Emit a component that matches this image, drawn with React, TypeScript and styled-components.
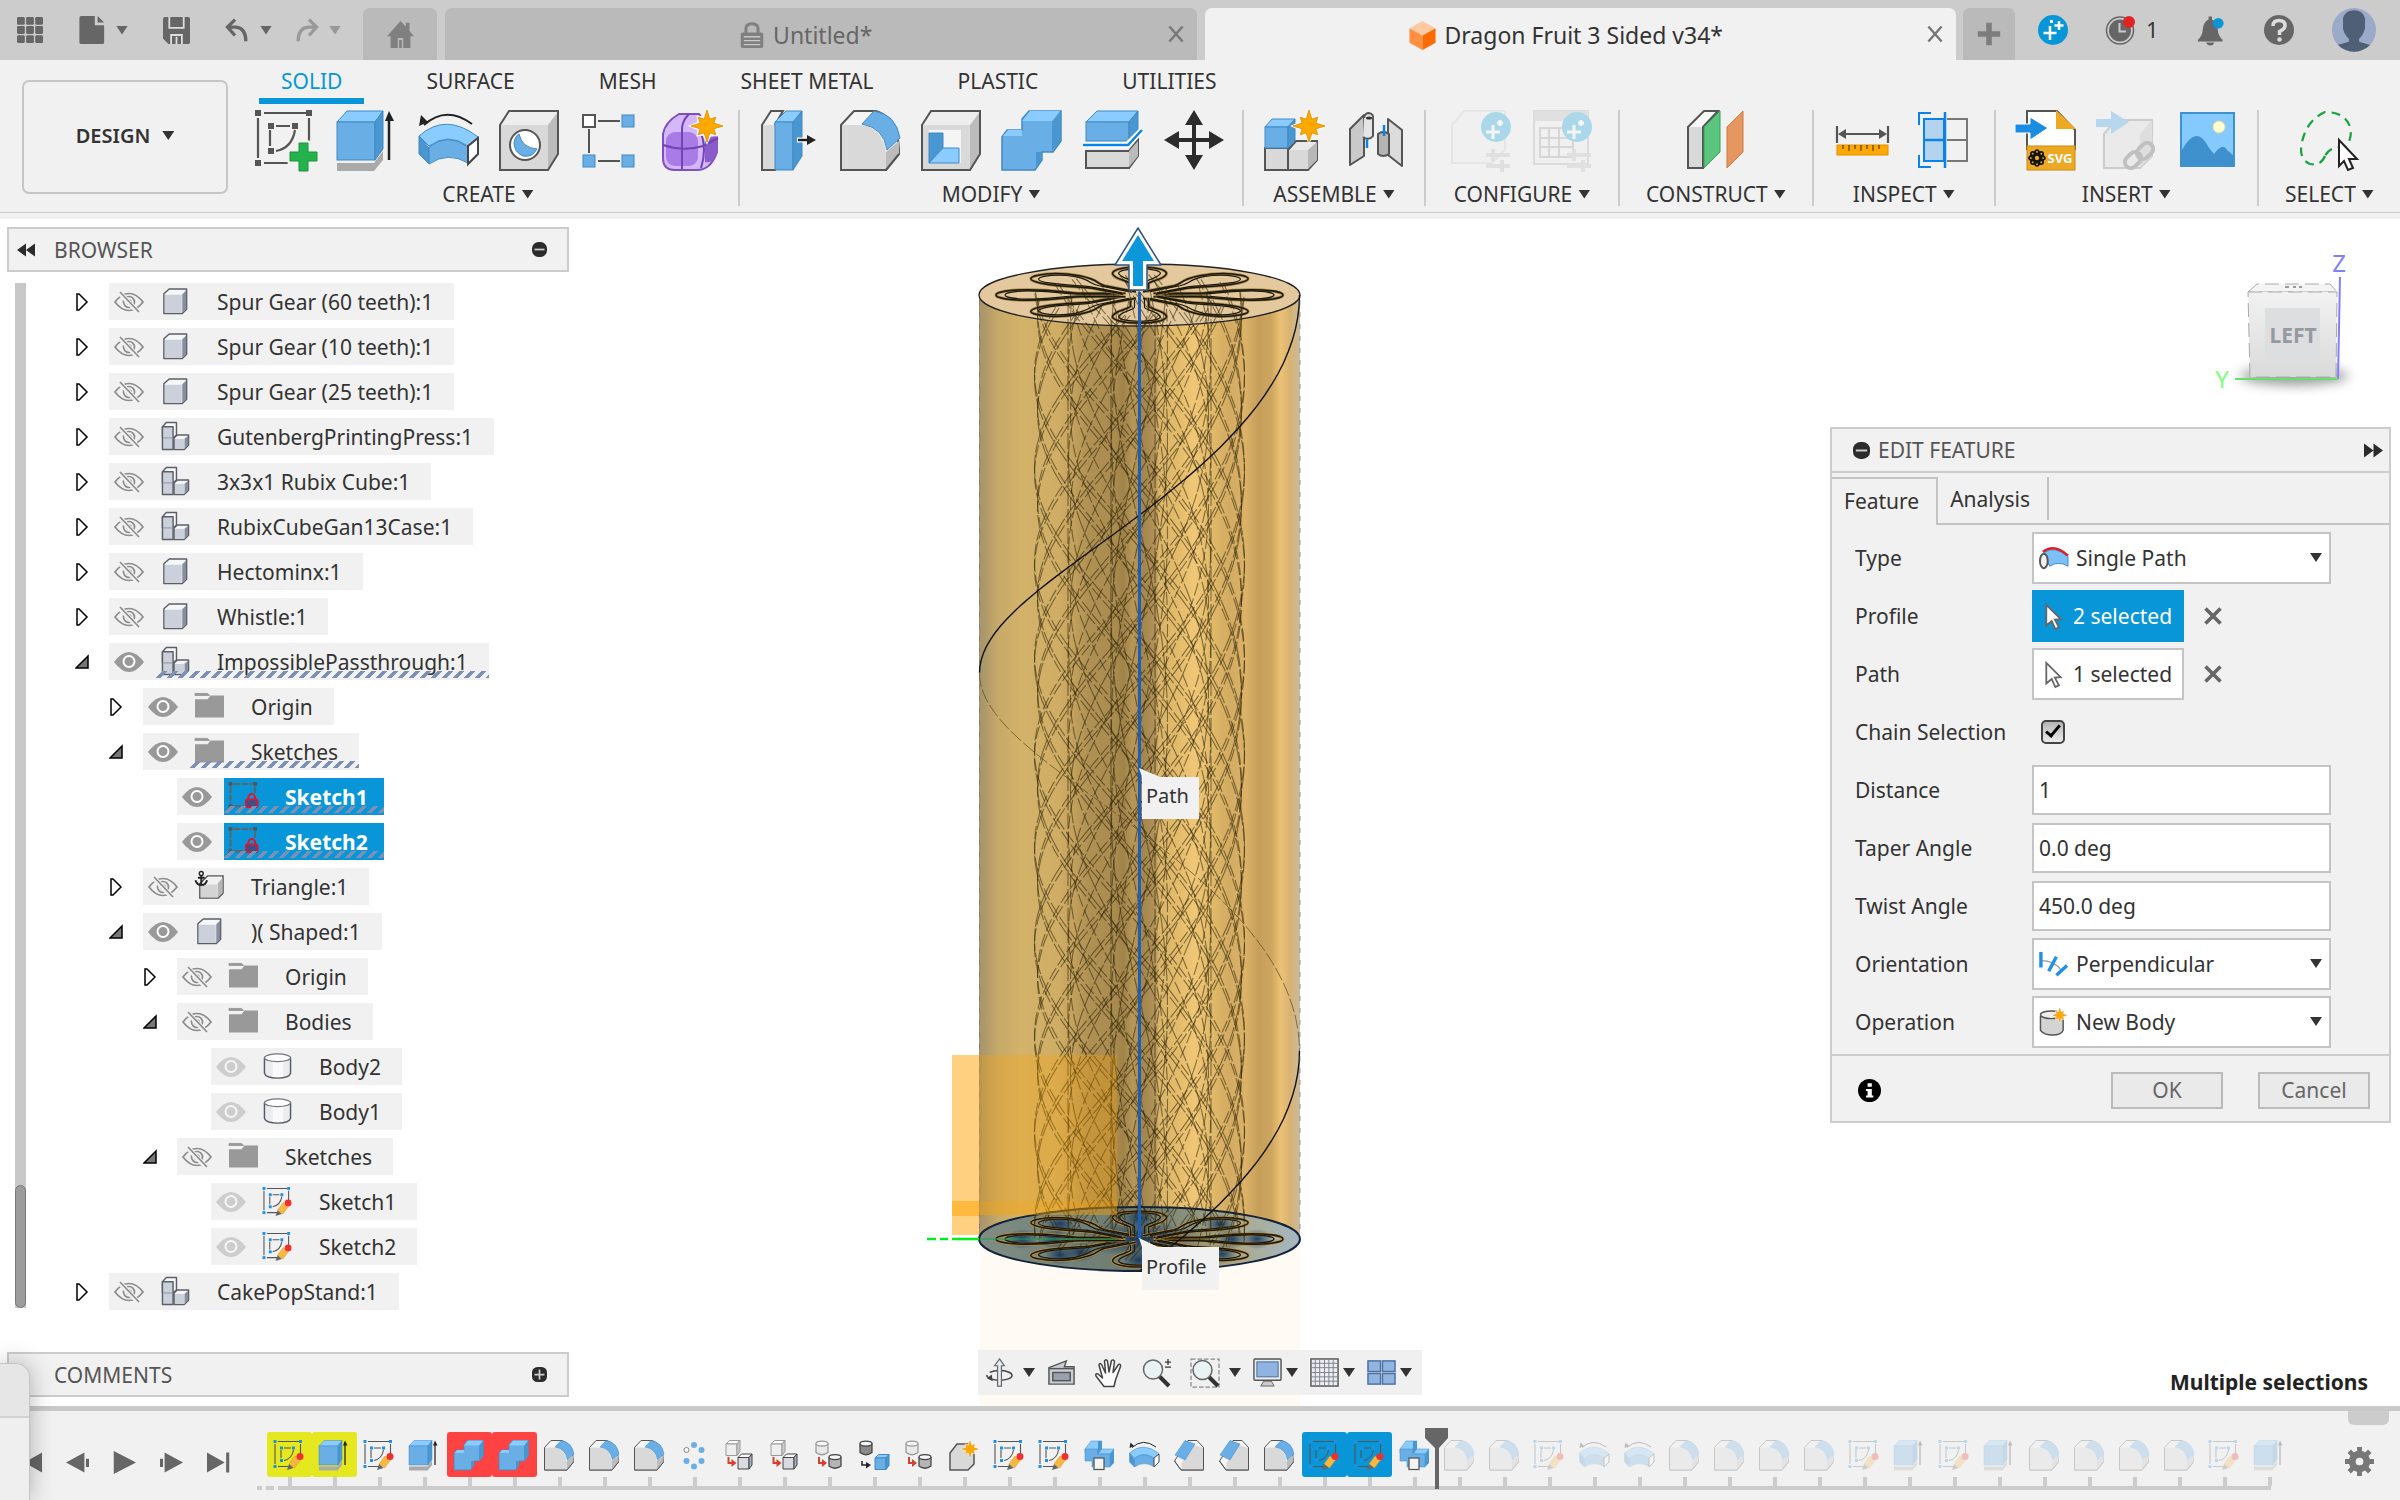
import React from 'react';
import styled, { createGlobalStyle, css } from 'styled-components';

const LIGHT = '#8accff';
const MID = '#69aee4';
const DARK = '#4897d0';
const EDGE = '#4089c4';
const INK = '#555';
const ACCENT = '#0896d8';

const Global = createGlobalStyle`
  *, *::before, *::after { box-sizing: border-box; }
  body { margin: 0; background: #fff; }
  body, button, input, select {
    font-family: 'Noto Sans', 'Open Sans', 'Liberation Sans', sans-serif;
    font-size: 21px;
    line-height: 28px;
    color: #333;
  }
  button { padding: 0; border: 0; background: none; white-space: nowrap; }
  ul { margin: 0; padding: 0; list-style: none; }
`;

/* ---------- icon drawings, all on a 60 x 60 grid ---------- */

const starPoints = (cx: number, cy: number, r: number, inner = 0.45) =>
  Array.from({ length: 16 }, (_, i) => {
    const a = (i * Math.PI) / 8;
    const k = i % 2 ? r * inner : i % 4 ? r * 0.78 : r;
    return `${(cx + Math.sin(a) * k).toFixed(1)},${(cy - Math.cos(a) * k).toFixed(1)}`;
  }).join(' ');

const Star = ({ x, y, r }: { x: number; y: number; r: number }) => (
  <>
    <polygon points={starPoints(x, y, r + 3, 0.55)} fill="#f8f8f8" />
    <polygon points={starPoints(x, y, r)} fill="#ffa800" stroke="#e89400" />
  </>
);

const SketchFrame = ({ dot = INK, line = INK }: { dot?: string; line?: string }) => (
  <>
    <path d="M8 3H50M2 8V48M53 8V36M8 53H32" stroke={line} strokeWidth="2.2" fill="none" />
    <path d="M20 16H34M14 20V36M39 20Q36 38 20 41" stroke={line} strokeWidth="2.2" fill="none" />
    {[[2, 3], [53, 3], [2, 53], [15, 16], [39, 16], [15, 41]].map(([x, y]) => (
      <rect key={`${x}-${y}`} x={x - 3} y={y - 3} width="6" height="6" fill={dot} />
    ))}
  </>
);

const ComboShape = () => (
  <>
    <path d="M0 27L5 20H20V9L27 1H59V31L51 42H40V50L33 60H0Z" fill={MID} stroke={EDGE} strokeWidth="1.5" />
    <path d="M1 26L6 20H20V26ZM20 11L28 1H58L50 11Z" fill={LIGHT} />
    <path d="M50 12L58 2V31L50 41ZM34 42H40V50L34 58Z" fill={DARK} />
  </>
);

const SweepShape = () => (
  <>
    <path d="M6 15Q28 -5 54 14" stroke="#222" strokeWidth="2" fill="none" />
    <polygon points="1,16 3,5 10,12" fill="#222" />
    <path d="M1 26Q28 2 60 27L50 36Q30 22 11 36Z" fill={LIGHT} stroke={EDGE} />
    <path d="M1 26L11 38V54L1 44Z" fill={DARK} stroke={EDGE} />
    <path d="M11 37Q30 22 50 37V53Q30 41 11 54Z" fill={MID} stroke={EDGE} />
    <path d="M50 36L60 28V44L50 54Z" fill="#fff" stroke="#444" strokeWidth="2" />
  </>
);

const GrayBox = () => (
  <>
    <path d="M1 15L10 1H59V44L49 60H1Z" fill="#eee" />
    <path d="M1 15H49L59 2V44L49 60H1Z" fill="#d9d9d9" />
    <path d="M49 15L59 2V44L49 59Z" fill="#bcbcbc" />
    <path d="M1 15L10 1H59V44L49 60H1Z" fill="none" stroke={INK} strokeWidth="2" />
  </>
);

const MiniBox = ({ x, y, top = '#fafafa', front = '#d8dbe2', side = '#a9afbc', edge = '#6c7079' }: { x: number; y: number; top?: string; front?: string; side?: string; edge?: string }) => (
  <g transform={`translate(${x} ${y})`} stroke={edge} strokeWidth="2" strokeLinejoin="round">
    <path d="M0 7L7 0H28L22 7Z" fill={top} />
    <path d="M0 7H22V30H0Z" fill={front} />
    <path d="M22 7L28 0V22L22 30Z" fill={side} />
  </g>
);

const MiniCan = ({ x, y, fill = '#e9e9e9', edge = '#666' }: { x: number; y: number; fill?: string; edge?: string }) => (
  <g transform={`translate(${x} ${y})`} stroke={edge} strokeWidth="2.5">
    <path d="M0 5V23Q12 32 24 23V5" fill={fill} />
    <ellipse cx="12" cy="5" rx="12" ry="5" fill="#f6f6f6" />
  </g>
);

const Chip = () => (
  <>
    <circle cx="44" cy="17" r="15" fill="#08a0dc" />
    <path d="M41 15V29M34 22H48M48 10V16M45 13H51" stroke="#fff" strokeWidth="3" />
    <path d="M34 45H58M34 56H58M41 39V51M50 50V62" stroke="#bbb" strokeWidth="4" />
  </>
);

const shapes: Record<string, React.ReactNode> = {
  newSketch: (
    <>
      <SketchFrame />
      <path d="M43 33h9v9h9v9h-9v10h-9v-10h-9v-9h9z" fill="#24b24c" stroke="#f1f1f1" strokeWidth="5" />
      <path d="M43 33h9v9h9v9h-9v10h-9v-10h-9v-9h9z" fill="#24b24c" stroke="#149438" />
    </>
  ),
  editSketch: (
    <>
      <SketchFrame dot="#1e90e8" />
      <path d="M30 48L42 32L53 40L41 56Z" fill="#f8b740" stroke="#d8941e" />
      <path d="M26 60L30 48L39 56Z" fill="#666" />
      <circle cx="52" cy="33" r="7" fill="#ee3030" />
    </>
  ),
  lockedSketch: (
    <>
      <path d="M9 4H48M3 9V45M54 9V26" stroke="#5f6468" strokeWidth="4" strokeDasharray="14 3" fill="none" />
      <path d="M9 50H30" stroke="#5f6468" strokeWidth="4" />
      <path d="M-1 0h8v8h-8zM50 0h8v8h-8zM-1 46h8v8h-8z" fill="#555" />
      <path d="M40 36v-4a7 7 0 0 1 14 0v4" fill="none" stroke="#e3142c" strokeWidth="4" />
      <rect x="35" y="36" width="24" height="16" rx="3" fill="#3f4f86" stroke="#e3142c" strokeWidth="4" />
    </>
  ),
  extrude: (
    <>
      <path d="M0 53H37L46 41V50L37 61H0Z" fill="#aaa" />
      <path d="M0 12L10 1H46L38 12Z" fill={LIGHT} stroke={EDGE} />
      <rect x="0" y="12" width="38" height="38" fill={MID} stroke={EDGE} />
      <path d="M38 12L46 1V39L38 50Z" fill={DARK} stroke={EDGE} />
      <path d="M52 8V50" stroke="#222" strokeWidth="2.5" />
      <polygon points="52,1 48,11 57,11" fill="#222" />
    </>
  ),
  sweep: <SweepShape />,
  hole: (
    <>
      <GrayBox />
      <circle cx="26" cy="35" r="15" fill="#fff" stroke={INK} strokeWidth="2" />
      <path d="M20 24Q23 38 38 39Q33 48 24 46Q15 42 15 33Q16 26 20 24Z" fill={MID} stroke={EDGE} />
    </>
  ),
  pattern: (
    <>
      <path d="M18 11H40M9 19V43M18 51H40" stroke={INK} strokeWidth="2" />
      <rect x="3" y="5" width="12" height="12" fill="#fff" stroke={INK} strokeWidth="2" />
      {[[42, 5], [3, 45], [42, 45]].map(([x, y]) => (
        <rect key={`${x}-${y}`} x={x} y={y} width="12" height="12" fill={MID} stroke={EDGE} />
      ))}
    </>
  ),
  form: (
    <>
      <path d="M2 24Q4 12 18 4H38L56 28V42Q50 60 36 60H14Q2 60 2 48Z" fill="#d5b8fb" stroke="#7d4fc0" strokeWidth="2" />
      <rect x="5" y="22" width="32" height="34" rx="9" fill="#a87be6" />
      <path d="M44 28L57 26V42Q52 54 44 52Z" fill="#8a5ccb" />
      <path d="M2 35Q22 42 42 36L57 28M21 59V22Q20 12 28 4M40 58Q46 40 40 22" stroke="#7243b5" strokeWidth="2" fill="none" />
      <Star x={46} y={16} r={16} />
    </>
  ),
  pressPull: (
    <>
      <path d="M3 15L12 1H24L16 15V60H3Z" fill="#f2f2f2" stroke={INK} strokeWidth="2" />
      <path d="M4 15H16V59H4Z" fill="#d9d9d9" />
      <path d="M16 12L27 1H43L35 12Z" fill={LIGHT} stroke={EDGE} />
      <rect x="16" y="12" width="18" height="48" fill={MID} stroke={EDGE} />
      <path d="M34 12L43 1V46L34 60Z" fill={DARK} stroke={EDGE} />
      <path d="M38 30H52" stroke="#fff" strokeWidth="5" />
      <path d="M39 30H52" stroke="#222" strokeWidth="2.5" />
      <polygon points="57,30 48,25 48,35" fill="#222" />
    </>
  ),
  fillet: (
    <>
      <path d="M1 15L14 1H36Q58 8 59 40V44L46 60H1Z" fill="#f4f4f4" stroke={INK} strokeWidth="2" />
      <path d="M1 15H22Q42 18 46 42V60H1Z" fill="#d9d9d9" />
      <path d="M46 42L59 31V44L46 59Z" fill="#bcbcbc" />
      <path d="M22 14L34 1Q56 4 60 28L47 40Q44 18 22 14Z" fill={MID} stroke={EDGE} />
      <path d="M1 15V60H46L59 44" fill="none" stroke={INK} strokeWidth="2" />
    </>
  ),
  chamfer: (
    <>
      <path d="M1 42L28 1H46L59 15V60H14Z" fill="#f4f4f4" stroke={INK} strokeWidth="2" />
      <path d="M15 46L40 10L58 16V59H15Z" fill="#d9d9d9" />
      <path d="M2 30L22 1L42 8L22 40Z" fill={MID} stroke={EDGE} />
      <path d="M59 15V60H14L1 42" fill="none" stroke={INK} strokeWidth="2" />
    </>
  ),
  shell: (
    <>
      <GrayBox />
      <rect x="8" y="20" width="32" height="33" fill="#f5f5f5" />
      <path d="M8 23H22V38L8 53Z" fill={DARK} stroke={EDGE} />
      <path d="M8 53L22 38H38V53Z" fill={LIGHT} stroke={EDGE} />
    </>
  ),
  combine: <ComboShape />,
  sheet: (
    <>
      <path d="M2 18L14 2H36L28 16V26H2Z" fill={LIGHT} stroke={EDGE} />
      <path d="M28 2H36V18L28 28Z" fill={DARK} />
      <path d="M28 28L36 18H60L52 28Z" fill={LIGHT} stroke={EDGE} />
      <path d="M2 18H27V28H52V54H16V42H2Z" fill={MID} stroke={EDGE} />
      <path d="M52 28L60 18V46L52 54Z" fill={DARK} />
      <rect x="20" y="36" width="20" height="23" fill="#f4f4f4" stroke={INK} strokeWidth="2.5" />
    </>
  ),
  split: (
    <>
      <path d="M3 12L14 1H55L46 12Z" fill={LIGHT} stroke={EDGE} />
      <rect x="3" y="12" width="43" height="19" fill={MID} stroke={EDGE} />
      <path d="M46 12L55 1V20L46 31Z" fill={DARK} stroke={EDGE} />
      <path d="M3 41H46L55 30V46L46 58H3Z" fill="#d9d9d9" stroke={INK} strokeWidth="2" />
      <path d="M46 41L55 31V46L46 57Z" fill="#bbb" />
      <path d="M0 35H44L59 20" fill="none" stroke="#fff" strokeWidth="6" />
      <path d="M0 35H45L59 20" fill="none" stroke="#0b82e6" strokeWidth="2.5" />
    </>
  ),
  move: (
    <>
      <path d="M30 12V48M12 30H48" stroke="#2c2c2c" strokeWidth="4" />
      <path d="M30 0L39 15H21ZM30 60L39 45H21ZM0 30L15 21V39ZM60 30L45 21V39Z" fill="#2c2c2c" />
    </>
  ),
  component: (
    <>
      <path d="M1 38H24V60H1Z" fill="#d9d9d9" stroke={INK} strokeWidth="2" />
      <path d="M24 40L32 31H53V50L44 60H24Z" fill="#e9e9e9" stroke={INK} strokeWidth="2" />
      <path d="M24 40H44V59H24Z" fill="#d9d9d9" />
      <path d="M44 40L53 32V50L44 59Z" fill="#b8b8b8" />
      <path d="M24 40V60" stroke={INK} strokeWidth="2" />
      <path d="M1 17L8 9H31L24 17Z" fill={LIGHT} stroke={EDGE} />
      <rect x="1" y="17" width="23" height="21" fill={MID} stroke={EDGE} />
      <path d="M24 17L31 9V30L24 38Z" fill={DARK} stroke={EDGE} />
      <Star x={45} y={16} r={16} />
    </>
  ),
  joint: (
    <>
      <g stroke={INK} strokeWidth="2" strokeLinejoin="round">
        <path d="M5 19L19 5V46L5 55Z" fill="#c9c9c9" />
        <path d="M19 8Q20 3 24 3Q29 4 28 9V26Q24 31 18 27" fill="#e5e5e5" />
        <path d="M43 9L57 20V56L43 45Z" fill="#dcdcdc" />
        <path d="M33 24Q38 20 44 24V44Q38 48 33 44Z" fill="#b5b5b5" />
      </g>
      <ellipse cx="24" cy="8" rx="3" ry="1.5" fill="#333" />
      <path d="M22 29V38M39 15V26" stroke="#0b82e6" strokeWidth="2.5" />
    </>
  ),
  configBox: (
    <g opacity=".3">
      <path d="M0 15L12 1H53V40L40 53H0Z" fill="#eee" stroke="#ccc" strokeWidth="2" />
      <Chip />
    </g>
  ),
  configTable: (
    <g opacity=".3">
      <rect x="1" y="1" width="54" height="53" fill="#eee" stroke="#aaa" strokeWidth="2" />
      <rect x="1" y="1" width="54" height="10" fill="#bbb" />
      <path d="M7 18H40V47H7ZM7 28H40M7 37H40M16 18V47M26 18V47" fill="none" stroke="#999" strokeWidth="2" />
      <Chip />
    </g>
  ),
  planes: (
    <>
      <path d="M2 17L18 1H32L17 17V58H2Z" fill="#f7f7f7" stroke={INK} strokeWidth="2" />
      <rect x="3" y="17" width="13" height="40" fill="#d9d9d9" />
      <path d="M18 17L34 1V42L18 58Z" fill="#5bc57e" stroke="#33a35a" />
      <path d="M41 17L57 1V42L41 58Z" fill="#e5975f" stroke="#cc7a40" />
    </>
  ),
  measure: (
    <>
      <path d="M4 16V33M55 16V33M10 24H48" stroke={INK} strokeWidth="2.2" />
      <path d="M5 24L13 19V29ZM54 24L46 19V29Z" fill={INK} />
      <rect x="4" y="35" width="51" height="10" fill="#ffa800" stroke="#e08f00" />
      <path d="M10 35v4M16 35v6M22 35v4M28 35v6M34 35v4M40 35v6M46 35v4" stroke="#7a5200" strokeWidth="1.5" />
    </>
  ),
  section: (
    <>
      <rect x="10" y="9" width="20" height="42" fill="#b3d3ee" stroke="#0b82e6" strokeWidth="2" />
      <path d="M33 9H53V51H33M33 30H53" fill="none" stroke="#777" strokeWidth="2" />
      <path d="M10 30H30M31 2V58" stroke="#0b82e6" strokeWidth="2.5" />
      <path d="M17 3H5V15M17 57H5V45" stroke="#0b82e6" strokeWidth="2" fill="none" />
    </>
  ),
  insertSvg: (
    <>
      <path d="M12 40V1H42L60 20V40" fill="#fff" stroke={INK} strokeWidth="2" />
      <path d="M41 0L61 19H41Z" fill="#eda921" />
      <rect x="12" y="36" width="48" height="24" fill="#eda921" stroke="#c68a12" />
      {[0, 45, 90, 135].map((a) => (
        <ellipse key={a} cx="22" cy="48" rx="8" ry="3" fill="none" stroke="#111" strokeWidth="1.6" transform={`rotate(${a} 22 48)`} />
      ))}
      <text x="45" y="53" fontSize="13" fontWeight="700" fill="#fff" textAnchor="middle">SVG</text>
      <path d="M0 14H15V7L33 18L15 30V23H0Z" fill="#1b8ce4" stroke="#fff" />
    </>
  ),
  insertLink: (
    <g opacity=".35">
      <path d="M8 24L20 10H56V46L44 58H8Z" fill="#dedede" stroke="#888" strokeWidth="2" />
      <path d="M44 24L56 10V46L44 58Z" fill="#bbb" />
      <path d="M0 9H15V1L33 12L15 24V17H0Z" fill="#4aa8ea" />
      <g fill="none" stroke="#666" strokeWidth="4">
        <rect x="28" y="44" width="18" height="12" rx="6" transform="rotate(-45 37 50)" />
        <rect x="40" y="35" width="18" height="12" rx="6" transform="rotate(-45 49 41)" />
      </g>
    </g>
  ),
  image: (
    <>
      <rect x="4" y="3" width="53" height="53" fill="#85caff" stroke="#3d92d0" strokeWidth="2" />
      <circle cx="42" cy="17" r="6" fill="#ffffd2" stroke="#e0dc9a" />
      <path d="M4 42Q12 26 20 26Q26 26 32 38L37 44Q46 32 50 40L57 46V57H4Z" fill="#3e91cd" />
    </>
  ),
  lasso: (
    <>
      <path d="M26 46Q22 56 11 54Q-1 49 3 32Q8 10 26 2Q48 2 52 20Q52 32 46 37Q31 36 26 46" fill="none" stroke="#17a43e" strokeWidth="2.2" strokeDasharray="9 6" />
      <path d="M40 30L58 49L50 49L54 58L49 60L45 51L40 56Z" fill="#fff" stroke="#222" strokeWidth="2" />
    </>
  ),
  dots: (
    <>
      {[[30, 10], [45, 20], [45, 42], [30, 53], [15, 42]].map(([x, y]) => (
        <circle key={`${x}-${y}`} cx={x} cy={y} r="6" fill={MID} />
      ))}
      <circle cx="15" cy="20" r="5" fill="#fff" stroke="#888" strokeWidth="2" />
    </>
  ),
  copyBox: (
    <>
      <MiniBox x={4} y={1} top="#fff" front="#eee" side="#ccc" edge="#999" />
      <MiniBox x={28} y={28} edge="#444" />
      <path d="M9 34V46H17" fill="none" stroke="#d8402c" strokeWidth="4" />
      <polygon points="15,38 25,46 15,54" fill="#d8402c" />
    </>
  ),
  copyCan: (
    <>
      <MiniCan x={4} y={2} edge="#999" />
      <MiniCan x={30} y={29} fill="#b5b5b5" edge="#444" />
      <path d="M10 34V46H18" fill="none" stroke="#d8402c" strokeWidth="4" />
      <polygon points="16,38 26,46 16,54" fill="#d8402c" />
    </>
  ),
  canToBox: (
    <>
      <MiniCan x={2} y={2} fill="#8a8a8a" edge="#444" />
      <MiniBox x={32} y={29} top={LIGHT} front={MID} side={DARK} edge={EDGE} />
      <path d="M6 42V50H16" fill="none" stroke="#222" strokeWidth="3" />
      <polygon points="14,44 24,50 14,57" fill="#222" />
    </>
  ),
  boxStar: (
    <>
      <path d="M2 26L16 8H40L50 26V48L38 60H2Z" fill="#d9d9d9" stroke={INK} strokeWidth="3" />
      <Star x={42} y={18} r={16} />
    </>
  ),
  cube: (
    <>
      <path d="M6 14L17 4H53V46L44 55H6Z" fill="#f6f7f9" stroke="#5b5f68" strokeWidth="3" strokeLinejoin="round" />
      <path d="M8 16H43V53H8Z" fill="#ccd0da" />
      <path d="M44 15L52 7V45L44 53Z" fill="#868d9c" />
    </>
  ),
  assembly: (
    <>
      <g stroke="#5b5f68" strokeWidth="3" strokeLinejoin="round">
        <path d="M3 10L11 1H32V27L26 32H3Z" fill="#f6f7f9" />
        <path d="M3 10H25V57H3Z" fill="#ccd0da" />
        <path d="M27 33L34 27H57V48L48 57H27Z" fill="#f6f7f9" />
      </g>
      <path d="M29 35H49V55H29Z" fill="#ccd0da" />
      <path d="M49 34L56 29V47L49 54Z" fill="#868d9c" />
      <path d="M4 33H25" stroke="#8d93a1" strokeWidth="2" />
    </>
  ),
  anchored: (
    <>
      <path d="M10 24L26 8H58V44L48 54H10Z" fill="#f1f1f1" stroke={INK} strokeWidth="3" />
      <path d="M12 26H46V52H12Z" fill="#d4d4d4" />
      <path d="M47 24L57 12V44L47 52Z" fill="#b5b5b5" />
      <circle cx="13" cy="3" r="4" fill="#fff" stroke="#222" strokeWidth="3" />
      <path d="M13 6V26M6 12H20M1 17Q4 27 13 27Q22 27 25 17" fill="none" stroke="#222" strokeWidth="4" />
    </>
  ),
  folder: (
    <>
      <path d="M0 3H26L30 7H0Z" fill="#999" stroke="#999" strokeWidth="2" />
      <path d="M0 15H26L32 7H60V53H0Z" fill="#999" />
    </>
  ),
  body: (
    <>
      <path d="M3 12V44Q6 54 30 54Q54 54 57 44V12" fill="#ececee" stroke="#555b66" strokeWidth="3" />
      <path d="M20 18H42V52H20Z" fill="#fff" opacity=".7" />
      <ellipse cx="30" cy="12" rx="27" ry="8" fill="#fff" stroke="#70757f" strokeWidth="2.5" />
    </>
  ),
  eye: (
    <>
      <path d="M0 30Q15 10 30 10Q45 10 60 30Q45 50 30 50Q15 50 0 30Z" fill="#999" />
      <circle cx="30" cy="29" r="11" fill="#999" stroke="#fff" strokeWidth="4" />
      <circle cx="30" cy="29" r="5" fill="#999" />
    </>
  ),
  eyeOff: (
    <g fill="none" stroke="#8c8c8c" strokeWidth="3.4">
      <path d="M2 30Q15 13 30 13Q45 13 58 30Q45 47 30 47Q15 47 2 30Z" />
      <circle cx="30" cy="30" r="11" />
      <circle cx="30" cy="30" r="4" />
      <path d="M10 10L50 52" stroke="#f1f1f1" strokeWidth="10" />
      <path d="M12 10L50 50" />
    </g>
  ),
  singlePath: (
    <>
      <path d="M10 18Q32 2 60 26V46Q40 34 22 46Z" fill="#7cc0f5" stroke={EDGE} strokeWidth="2" />
      <path d="M8 16Q32 -2 60 24" stroke="#dc1e28" strokeWidth="5" fill="none" />
      <ellipse cx="10" cy="35" rx="8" ry="15" fill="#f0f0f0" stroke="#555" strokeWidth="4" />
    </>
  ),
  perpendicular: (
    <>
      <path d="M4 22Q32 22 46 42" stroke="#999" strokeWidth="3" fill="none" />
      <path d="M4 4V36M36 14L20 44M58 32L36 52" stroke="#1e90e8" strokeWidth="7" />
    </>
  ),
  newBody: (
    <>
      <path d="M3 16V46Q10 56 28 56Q46 56 50 46V16" fill="#d4d4d4" stroke={INK} strokeWidth="3" />
      <ellipse cx="26" cy="14" rx="23" ry="8" fill="#eee" stroke={INK} strokeWidth="3" />
      <Star x={43} y={15} r={14} />
    </>
  ),
  cursor: <path d="M14 4L46 36L33 37L42 54L34 58L26 40L14 50Z" fill="#fff" stroke="#666" strokeWidth="4" />,
  cross: <path d="M5 5L55 55M55 5L5 55" stroke="#666" strokeWidth="12" />,
  close: <path d="M8 5L52 55M52 5L8 55" stroke="#777" strokeWidth="8" />,
  grid9: (
    <>
      {[0, 21, 42].map((y) => [0, 21, 42].map((x) => <rect key={`${x}-${y}`} x={x} y={y} width="18" height="18" rx="3" fill="#666" />))}
    </>
  ),
  file: <path d="M7 0H36V20H56V56Q56 60 52 60H7Q3 60 3 56V4Q3 0 7 0ZM42 0L56 14H42Z" fill="#666" />,
  save: (
    <>
      <path d="M4 0H56Q60 0 60 4V56Q60 60 56 60H12L0 48V4Q0 0 4 0Z" fill="#666" />
      <path d="M14 0V24H46V0M18 60V40H42V60M30 44V60" fill="none" stroke="#ddd" strokeWidth="4" />
    </>
  ),
  undo: <path d="M24 4L6 22L24 42M6 22H26Q50 24 50 56" fill="none" stroke="#666" strokeWidth="8" />,
  redo: <path d="M36 4L54 22L36 42M54 22H34Q10 24 10 56" fill="none" stroke="#999" strokeWidth="8" />,
  home: <path d="M30 0L42 13V4H50V22L60 34H52V60H36V38H24V60H8V34H0ZM27 42H33V60H27Z" fill="#808080" />,
  lock: (
    <>
      <path d="M16 26V16Q16 4 30 4Q44 4 44 16V26" fill="none" stroke="#808080" strokeWidth="7" />
      <rect x="4" y="24" width="52" height="36" rx="5" fill="#808080" />
      <path d="M11 34H49M11 43H49M11 52H49" stroke="#c8c8c8" strokeWidth="3" />
    </>
  ),
  orangeCube: (
    <>
      <path d="M30 0L57 15L30 30L3 15Z" fill="#ffc9a3" />
      <path d="M3 15L30 30V60L3 45Z" fill="#ff8f42" />
      <path d="M57 15L30 30V60L57 45Z" fill="#ff6b00" />
    </>
  ),
  plus: <path d="M23 2H37V23H58V37H37V58H23V37H2V23H23Z" fill="#7d7d7d" />,
  spark: (
    <>
      <circle cx="30" cy="30" r="30" fill="#0896d8" />
      <path d="M24 22V50M11 36H37M42 12V30M33 21H51M27 10V16M24 13H30" stroke="#fff" strokeWidth="5" />
    </>
  ),
  clock: (
    <>
      <circle cx="28" cy="31" r="27" fill="none" stroke="#666" strokeWidth="3" />
      <circle cx="28" cy="31" r="22" fill="#666" />
      <path d="M27 16V33H40" fill="none" stroke="#ccc" strokeWidth="4" />
      <circle cx="46" cy="14" r="12" fill="#e02424" />
    </>
  ),
  bell: (
    <>
      <path d="M26 1H33V7Q45 12 45 28Q46 42 55 49V53H4V49Q13 42 14 28Q15 12 26 7ZM21 55H38Q36 61 30 61Q23 61 21 55Z" fill="#666" />
      <circle cx="46" cy="15" r="11" fill="#0896d8" />
    </>
  ),
  help: (
    <>
      <circle cx="30" cy="30" r="30" fill="#666" />
      <path d="M18 22Q18 11 30 11Q42 11 42 21Q42 28 31 33V40" fill="none" stroke="#ddd" strokeWidth="7" />
      <circle cx="31" cy="49" r="4.5" fill="#ddd" />
    </>
  ),
  avatar: (
    <>
      <circle cx="30" cy="30" r="30" fill="#9aaac8" />
      <path d="M15 14Q18 3 30 3Q42 3 45 14V28Q42 38 37 42V46Q50 50 52 50A30 30 0 0 1 8 50Q14 49 23 46V42Q17 37 15 28Z" fill="#4f5f76" />
    </>
  ),
  gear: (
    <>
      <circle cx="30" cy="30" r="15" fill="none" stroke="#777" strokeWidth="14" />
      {[0, 45, 90, 135].map((a) => (
        <path key={a} d="M25 0H35V12H25ZM25 48H35V60H25Z" fill="#777" transform={`rotate(${a} 30 30)`} />
      ))}
    </>
  ),
  info: (
    <>
      <circle cx="30" cy="30" r="30" fill="#000" />
      <path d="M25 11H36V20H25ZM21 26H36V43H40V48H21V43H25V31H21Z" fill="#fff" />
    </>
  ),
  minusDot: (
    <>
      <rect width="60" height="60" rx="26" fill="#2b2b2b" />
      <path d="M10 30H50" stroke="#ccc" strokeWidth="7" />
    </>
  ),
  plusDot: (
    <>
      <rect width="60" height="60" rx="22" fill="#2b2b2b" />
      <path d="M10 30H50M30 10V50" stroke="#ccc" strokeWidth="7" />
    </>
  ),
  collapse: <path d="M0 30L30 8V52ZM30 30L60 8V52Z" fill="#2b2b2b" />,
  expand: <path d="M0 8L30 30L0 52ZM30 8L60 30L30 52Z" fill="#2b2b2b" />,
  toStart: <path d="M60 4V56L14 30ZM2 4H10V56H2Z" fill="#666" />,
  stepBack: <path d="M48 4V56L0 30ZM52 20H60V42H52Z" fill="#666" />,
  play: <path d="M2 0L60 30L2 60Z" fill="#666" />,
  stepOn: <path d="M0 20H8V42H0ZM12 4L60 30L12 56Z" fill="#666" />,
  toEnd: <path d="M0 4L46 30L0 56ZM50 4H58V56H50Z" fill="#666" />,
  orbit: (
    <>
      <ellipse cx="30" cy="36" rx="26" ry="10" fill="none" stroke="#444" strokeWidth="3" strokeDasharray="60 8" />
      <path d="M30 2L40 16H34V58H26V16H20Z" fill="#e8ecf2" stroke="#666" strokeWidth="2.5" />
      <path d="M4 42L14 34L16 48Z" fill="#444" />
    </>
  ),
  lookAt: (
    <>
      <path d="M4 20L40 6L36 18H56V54H4Z" fill="#c9ced6" stroke="#555" strokeWidth="3" />
      <path d="M4 22H56" stroke="#555" strokeWidth="3" />
      <rect x="12" y="30" width="36" height="17" fill="#9aa1ad" stroke="#555" strokeWidth="3" />
    </>
  ),
  hand: <path d="M20 57L4 36Q2 30 8 32L17 40L10 14Q11 9 15 13L23 30L21 6Q24 1 27 6L30 28L35 5Q39 2 41 7L38 29L49 13Q54 11 53 17L43 44L40 57Z" fill="#fafafa" stroke="#444" strokeWidth="3" strokeLinejoin="round" />,
  zoomPm: (
    <>
      <path d="M34 36L54 56" stroke="#333" strokeWidth="8" />
      <circle cx="22" cy="23" r="19" fill="#e9f3f4" stroke="#666" strokeWidth="3" />
      <path d="M52 2V14M46 8H58M46 18H58" stroke="#333" strokeWidth="2.5" />
    </>
  ),
  zoomFit: (
    <>
      <rect x="2" y="2" width="56" height="56" fill="none" stroke="#888" strokeWidth="2.5" strokeDasharray="9 4" />
      <path d="M38 38L56 56" stroke="#333" strokeWidth="8" />
      <circle cx="25" cy="24" r="19" fill="#e9f3f4" stroke="#666" strokeWidth="3" />
    </>
  ),
  monitor: (
    <>
      <rect x="2" y="2" width="56" height="44" rx="2" fill="#eee" stroke="#555" strokeWidth="3" />
      <rect x="8" y="8" width="44" height="31" fill="#8fb4e0" stroke="#456c9e" strokeWidth="2" />
      <path d="M22 48H38L44 58H16Z" fill="#ccc" stroke="#666" strokeWidth="2" />
    </>
  ),
  gridView: (
    <>
      <rect x="2" y="2" width="56" height="56" fill="#eceef2" stroke="#555" strokeWidth="3" />
      <path d="M11 2V58M20 2V58M30 2V58M39 2V58M48 2V58M2 11H58M2 20H58M2 30H58M2 39H58M2 48H58" stroke="#7d828c" strokeWidth="2" />
    </>
  ),
  viewports: (
    <g fill="#92b5df" stroke="#4a6fa3" strokeWidth="3">
      <rect x="2" y="6" width="26" height="22" /><rect x="32" y="6" width="26" height="22" />
      <rect x="2" y="32" width="26" height="22" /><rect x="32" y="32" width="26" height="22" />
    </g>
  ),
};

const Glyph = styled.svg<{ $size: number }>`
  width: ${(p) => p.$size}px;
  height: ${(p) => p.$size}px;
  flex: none;
  display: block;
  overflow: visible;
`;
const Icon = ({ name, size = 30 }: { name: string; size?: number }) => (
  <Glyph $size={size} viewBox="0 0 60 60" aria-hidden="true">{shapes[name]}</Glyph>
);

const CaretShape = styled.span<{ $tone?: string }>`
  flex: none;
  width: 12px;
  height: 9px;
  background: ${(p) => p.$tone ?? '#333'};
  clip-path: polygon(0 0, 100% 0, 50% 100%);
`;

/* ---------- shell ---------- */

const Shell = styled.div`
  position: relative;
  display: flex;
  flex-direction: column;
  min-height: 100vh;
  overflow: hidden;
  background: #fff;
`;

const TopBar = styled.header`
  display: flex;
  align-items: flex-end;
  height: 60px;
  background: #ccc;
`;
const QuickTools = styled.div`
  flex: none;
  display: flex;
  align-items: center;
  gap: 35px;
  width: 363px;
  height: 60px;
  padding-left: 17px;
`;
const ToolPair = styled.div`
  display: flex;
  align-items: center;
  gap: 22px;
`;
const BarButton = styled.button`
  display: flex;
  align-items: center;
  gap: 10px;
`;
const docShape = css`
  height: 52px;
  border-radius: 7px 7px 0 0;
  display: flex;
  align-items: center;
`;
const SmallTab = styled.button<{ $width: number; $lead?: number }>`
  ${docShape}
  flex: none;
  justify-content: center;
  width: ${(p) => p.$width}px;
  margin-left: ${(p) => p.$lead ?? 0}px;
  background: #bababa;
`;
const DocTab = styled.div<{ $active?: boolean }>`
  ${docShape}
  flex: 1;
  min-width: 0;
  margin-left: 8px;
  padding-right: 12px;
  background: ${(p) => (p.$active ? '#f1f1f1' : '#bababa')};
`;
const DocTitle = styled.button<{ $active?: boolean }>`
  flex: 1;
  display: flex;
  align-items: center;
  justify-content: center;
  gap: 8px;
  padding-top: 2px;
  font-size: 23px;
  color: ${(p) => (p.$active ? '#333' : '#666')};
`;
const Account = styled.div`
  flex: none;
  display: flex;
  align-items: center;
  justify-content: space-between;
  width: 385px;
  height: 60px;
  padding: 0 24px 0 23px;
`;

/* ---------- ribbon ---------- */

const Ribbon = styled.section`
  display: flex;
  height: 159px;
  border-bottom: 6px solid #f1f1f1;
  background: #f1f1f1;
  box-shadow: inset 0 -1px 0 #c8c8c8;
`;
const Workspace = styled.button`
  flex: none;
  display: flex;
  align-items: center;
  justify-content: center;
  gap: 12px;
  width: 206px;
  height: 114px;
  margin: 20px 10px 0 22px;
  padding-bottom: 3px;
  border: 2px solid #c6c6c6;
  border-radius: 7px;
  font-size: 20px;
  font-weight: 600;
`;
const RibbonMain = styled.div`
  flex: 1;
  display: flex;
  flex-direction: column;
`;
const RibbonTabs = styled.nav`
  display: flex;
  gap: 40px;
  height: 44px;
  padding-left: 21px;
`;
const RibbonTab = styled.button<{ $active?: boolean }>`
  padding: 3px 22px 0;
  border-bottom: 6px solid ${(p) => (p.$active ? ACCENT : 'transparent')};
  color: ${(p) => (p.$active ? ACCENT : '#333')};
`;
const Groups = styled.div`
  display: flex;
  margin-top: 6px;
`;
const Group = styled.div<{ $pad: number }>`
  display: flex;
  flex-direction: column;
  align-items: center;
  gap: 10px;
  height: 96px;
  padding: 0 ${(p) => p.$pad}px;
  border-right: 2px solid #ccc;
  &:last-child { flex: 1; border-right: 0; }
`;
const GroupIcons = styled.div`
  display: flex;
`;
const GroupTool = styled.button`
  display: flex;
  justify-content: center;
  width: 81px;
  height: 60px;
`;
const GroupLabel = styled.button`
  display: flex;
  align-items: center;
  gap: 6px;
`;

const groups = [
  { label: 'CREATE', pad: 7, tools: ['newSketch', 'extrude', 'sweep', 'hole', 'pattern', 'form'] },
  { label: 'MODIFY', pad: 8, tools: ['pressPull', 'fillet', 'shell', 'combine', 'split', 'move'] },
  { label: 'ASSEMBLE', pad: 9, tools: ['component', 'joint'] },
  { label: 'CONFIGURE', pad: 15, tools: ['configBox', 'configTable'] },
  { label: 'CONSTRUCT', pad: 26, tools: ['planes'] },
  { label: 'INSPECT', pad: 9, tools: ['measure', 'section'] },
  { label: 'INSERT', pad: 9, tools: ['insertSvg', 'insertLink', 'image'] },
  { label: 'SELECT', pad: 0, tools: ['lasso'] },
];

/* ---------- work area ---------- */

const Stage = styled.main`
  flex: 1;
  display: grid;
  grid-template-columns: 570px 1fr 570px;
`;
const LeftDock = styled.aside`
  display: flex;
  flex-direction: column;
  padding: 8px 1px 9px 7px;
`;
const DockHeader = styled.div`
  display: flex;
  align-items: center;
  gap: 19px;
  height: 45px;
  padding: 0 20px 0 8px;
  border: 2px solid #ccc;
  background: #f1f1f1;
  color: #555;
`;
const DockTitle = styled.span`
  flex: 1;
`;
const IconBox = styled.button<{ $blank?: boolean }>`
  flex: none;
  visibility: ${(p) => (p.$blank ? 'hidden' : 'visible')};
`;
const TreeArea = styled.div`
  flex: 1;
  display: flex;
  padding: 7px 0 0 8px;
`;
const ScrollRail = styled.div`
  flex: none;
  display: flex;
  align-items: flex-end;
  width: 11px;
  height: 1025px;
  margin-top: 4px;
  background: #c8c8c8;
`;
const ScrollThumb = styled.div`
  width: 11px;
  height: 123px;
  border: 1px solid #777;
  border-radius: 6px;
  background: #9c9c9c;
`;
const TreeRow = styled.li<{ $level: number }>`
  display: flex;
  align-items: center;
  height: 45px;
  padding-left: ${(p) => 48 + p.$level * 34}px;
`;
const Expander = styled.button`
  flex: none;
  display: flex;
  justify-content: center;
  width: 16px;
  margin-right: 19px;
`;
const EyeButton = styled.button<{ $dim?: boolean }>`
  display: flex;
  align-items: center;
  height: 37px;
  padding: 0 12px 0 5px;
  background: #f1f1f1;
  & > svg { opacity: ${(p) => (p.$dim ? 0.4 : 1)}; }
`;
const NodeButton = styled.button<{ $selected?: boolean; $hatched?: boolean }>`
  position: relative;
  display: flex;
  align-items: center;
  gap: 27px;
  height: 37px;
  padding: 0 ${(p) => (p.$selected ? 16 : 21)}px 0 5px;
  background: ${(p) => (p.$selected ? ACCENT : '#f1f1f1')};
  color: ${(p) => (p.$selected ? '#fff' : '#333')};
  font-weight: ${(p) => (p.$selected ? 700 : 400)};
  ${(p) => p.$hatched && css`
    &::after {
      content: '';
      position: absolute;
      left: 0;
      right: 0;
      bottom: 2px;
      height: 7px;
      background: linear-gradient(135deg, transparent 34%, #7b90b3 34% 64%, transparent 64%) 0 0 / 11px 7px;
    }
  `}
`;

type Node = { t: string; i: string; l: number; open?: boolean; leaf?: boolean; eye?: string; dim?: boolean; sel?: boolean; hatch?: boolean };
const nodes: Node[] = [
  { t: 'Spur Gear (60 teeth):1', i: 'cube', l: 0 },
  { t: 'Spur Gear (10 teeth):1', i: 'cube', l: 0 },
  { t: 'Spur Gear (25 teeth):1', i: 'cube', l: 0 },
  { t: 'GutenbergPrintingPress:1', i: 'assembly', l: 0 },
  { t: '3x3x1 Rubix Cube:1', i: 'assembly', l: 0 },
  { t: 'RubixCubeGan13Case:1', i: 'assembly', l: 0 },
  { t: 'Hectominx:1', i: 'cube', l: 0 },
  { t: 'Whistle:1', i: 'cube', l: 0 },
  { t: 'ImpossiblePassthrough:1', i: 'assembly', l: 0, open: true, eye: 'eye', hatch: true },
  { t: 'Origin', i: 'folder', l: 1, eye: 'eye' },
  { t: 'Sketches', i: 'folder', l: 1, open: true, eye: 'eye', hatch: true },
  { t: 'Sketch1', i: 'lockedSketch', l: 2, leaf: true, eye: 'eye', sel: true, hatch: true },
  { t: 'Sketch2', i: 'lockedSketch', l: 2, leaf: true, eye: 'eye', sel: true, hatch: true },
  { t: 'Triangle:1', i: 'anchored', l: 1 },
  { t: ')( Shaped:1', i: 'cube', l: 1, open: true, eye: 'eye' },
  { t: 'Origin', i: 'folder', l: 2 },
  { t: 'Bodies', i: 'folder', l: 2, open: true },
  { t: 'Body2', i: 'body', l: 3, leaf: true, eye: 'eye', dim: true },
  { t: 'Body1', i: 'body', l: 3, leaf: true, eye: 'eye', dim: true },
  { t: 'Sketches', i: 'folder', l: 2, open: true },
  { t: 'Sketch1', i: 'editSketch', l: 3, leaf: true, eye: 'eye', dim: true },
  { t: 'Sketch2', i: 'editSketch', l: 3, leaf: true, eye: 'eye', dim: true },
  { t: 'CakePopStand:1', i: 'assembly', l: 0 },
];

const ExpandMark = ({ open }: { open?: boolean }) => (
  <svg width="14" height="18" viewBox="0 0 14 18" aria-hidden="true">
    {open
      ? <path d="M1 15L13 3V15Z" fill="#777" stroke="#000" strokeWidth="1.5" />
      : <path d="M2 1H4L12 9L4 17H2Z" fill="#fff" stroke="#000" strokeWidth="1.5" />}
  </svg>
);

/* ---------- model view ---------- */

const View = styled.section`
  position: relative;
  min-height: 900px;
`;
const ModelSvg = styled.svg`
  position: absolute;
  inset: 0;
  width: 100%;
  height: 100%;
`;
const NavBar = styled.div`
  position: absolute;
  bottom: 11px;
  left: 50%;
  transform: translateX(-50%);
  display: flex;
  align-items: center;
  gap: 12px;
  width: 444px;
  height: 45px;
  padding: 0 7px;
  background: #f0f0f0;
`;
const NavTool = styled.button<{ $gap?: number; $lead?: number }>`
  display: flex;
  align-items: center;
  gap: ${(p) => p.$gap ?? 4}px;
  margin-left: ${(p) => p.$lead ?? 0}px;
`;

const CX = 1139.5;
const helix = (r: number, phaseDeg: number, from = 0, to = 945) => {
  const pts: string[] = [];
  for (let d = from; d <= to; d += 9) {
    const a = (d / 756) * Math.PI * 2 + (phaseDeg * Math.PI) / 180;
    pts.push(`${(CX + r * Math.cos(a)).toFixed(1)} ${(295 + d + r * 0.194 * Math.sin(a)).toFixed(1)}`);
  }
  return `M${pts.join('L')}`;
};
const eight = Array.from({ length: 8 }, (_, i) => i * 45);
const lattice = eight.flatMap((a) => [
  helix(105, a + 5), helix(105, a + 8), helix(102, a - 8), helix(102, a - 11),
  helix(71, a + 12), helix(69, a - 12), helix(28, a + 22),
]);
const PETAL = 'M14 9L58 9C72 10 82 27 112 27C154 25 154 -25 112 -27C82 -27 72 -10 58 -9L14 -9';
const PETAL_IN = 'M20 5L62 5C78 6 88 20 112 21C142 19 142 -19 112 -21C88 -20 78 -6 62 -5L20 -5';

const Petals = ({ y, gold }: { y: number; gold: string }) => (
  <g transform={`translate(${CX} ${y}) scale(1 .195)`} fill="none">
    {eight.map((a) => (
      <g key={a} transform={`rotate(${a})`}>
        <path d={PETAL} stroke={gold} strokeWidth="3" vectorEffect="non-scaling-stroke" />
        <path d={PETAL} stroke="#1b170a" strokeWidth="1.5" vectorEffect="non-scaling-stroke" />
        <path d={PETAL_IN} stroke="#1b170a" strokeWidth="1.2" vectorEffect="non-scaling-stroke" />
      </g>
    ))}
  </g>
);

const goldStops: [number, string][] = [
  [0, '#a3926e'], [2, '#b09a6a'], [6, '#c7aa68'], [13, '#d3b26a'], [25, '#cfad65'], [29, '#c4a25e'], [34, '#b09154'],
  [42, '#ab8c50'], [45, '#a08349'], [48, '#b89759'], [51, '#a3864c'], [55, '#b3935a'], [56, '#d9b56a'], [62, '#e3bb6b'], [67, '#efc777'],
  [73, '#e0b869'], [78, '#d3ab62'], [83, '#dbb267'], [87, '#c69f5b'], [91, '#cda55f'], [94, '#ecc275'], [97, '#d8b273'], [100, '#c9bca0'],
];

const blobs = [[1022, 1239], [1054, 1239], [1060, 1224], [1080, 1252], [1060, 1255], [1220, 1224], [1222, 1254], [1232, 1239], [1257, 1239], [1139, 1218], [1139, 1260]];

const Model = () => (
  <ModelSvg viewBox="900 219 600 1187" role="img" aria-label="Twisted cylinder model">
    <defs>
      <linearGradient id="gold">
        {goldStops.map(([o, c]) => <stop key={o} offset={`${o}%`} stopColor={c} />)}
      </linearGradient>
      <linearGradient id="disc">
        <stop offset="0" stopColor="#7f8d84" /><stop offset=".5" stopColor="#6c7a70" />
        <stop offset=".8" stopColor="#aaa98a" /><stop offset="1" stopColor="#a5b7c4" />
      </linearGradient>
      <radialGradient id="blob"><stop offset="0" stopColor="#12335c" stopOpacity=".9" /><stop offset="1" stopColor="#12335c" stopOpacity="0" /></radialGradient>
      <clipPath id="inside"><path d="M979 295A160.5 31 0 0 1 1300 295V1239A160.5 32 0 0 1 979 1239Z" /></clipPath>
    </defs>
    <rect x="980" y="1240" width="320" height="166" fill="#fffaf4" />
    <path d="M979 295V1239A160.5 32 0 0 0 1300 1239V295Z" fill="url(#gold)" />
    <ellipse cx={CX} cy="295" rx="160.5" ry="31" fill="#e4c99e" stroke="#222" strokeWidth="1.3" />
    <ellipse cx={CX} cy="1239" rx="160.5" ry="32" fill="url(#disc)" stroke="#12233a" strokeWidth="2" />
    {blobs.map(([x, y]) => (
      <ellipse key={`${x}-${y}`} cx={x} cy={y} rx="16" ry="10" fill="url(#blob)" />
    ))}
    <ellipse cx={CX} cy="1239" rx="64" ry="18" fill="url(#blob)" />
    <Petals y={295} gold="#a98a4c" />
    <Petals y={1239} gold="#b98f40" />
    <g clipPath="url(#inside)" fill="none" stroke="#2d2407" strokeOpacity=".55" strokeWidth="1.1">
      {lattice.map((d, i) => <path key={i} d={d} strokeDasharray={i % 3 ? '13 3' : '22 2'} />)}
      <path d="M1068 300V1230M1211 300V1230M1111 320V1230M1155 320V1230" strokeDasharray="16 3" />
    </g>
    <path d={helix(160, 0, 0, 378)} fill="none" stroke="#111" strokeWidth="1.4" />
    <path d={helix(160, 0, 378, 756)} fill="none" stroke="#55481f" strokeWidth="1" strokeDasharray="14 3" opacity=".7" />
    <path d={helix(160, 0, 756, 945)} fill="none" stroke="#111" strokeWidth="1.4" />
    <path d="M979.5 300V1236M1300 300V1236" stroke="#777" strokeDasharray="5 7" opacity=".7" />
    <g fill="#ffa200">
      <path d="M952 1055H979V1235H952Z" opacity=".5" />
      <path d="M979 1055H1117V1215H979Z" opacity=".27" />
      <path d="M952 1201H979V1216H952Z" opacity=".5" />
      <path d="M979 1201H1117V1215H979Z" opacity=".22" />
    </g>
    <path d="M927 1239H936M940 1239H948M952 1239H979" stroke="#00ee1c" strokeWidth="2.5" />
    <path d="M980 1239H1117" stroke="#1f9f58" strokeWidth="1.5" opacity=".7" />
    <path d={`M${CX} 292V1239`} stroke="#1d5fb8" strokeWidth="3" />
    <path d="M1138 228L1161 265H1147V290H1129V265H1115Z" fill="#fff" stroke="#2d5480" strokeWidth="1.5" strokeLinejoin="round" />
    <path d="M1138 235L1154 261H1143V286H1133V261H1122Z" fill="#0c97da" />
    <path d="M1139 768L1160 777H1199V819H1142V777Z" fill="#f1f1f1" />
    <text x="1146" y="803" fontSize="20" fill="#333">Path</text>
    <path d="M1139 1238L1158 1247H1219V1290H1142V1247Z" fill="#f1f1f1" />
    <text x="1146" y="1274" fontSize="20" fill="#333">Profile</text>
  </ModelSvg>
);

/* ---------- right dock ---------- */

const RightDock = styled.aside`
  display: flex;
  flex-direction: column;
  align-items: flex-end;
`;
const Cube = styled.svg`
  flex: none;
  width: 190px;
  height: 208px;
`;
const Dialog = styled.form`
  width: 561px;
  margin-right: 9px;
  border: 2px solid #ccc;
  background: #f1f1f1;
`;
const DialogHead = styled.div`
  display: flex;
  align-items: center;
  gap: 8px;
  height: 44px;
  padding: 0 6px 0 21px;
  border-bottom: 2px solid #ccc;
  color: #555;
`;
const DialogTabs = styled.div`
  display: flex;
  height: 52px;
  padding-top: 4px;
`;
const DialogTab = styled.button<{ $active?: boolean }>`
  padding: 0 17px ${(p) => (p.$active ? 2 : 3)}px 12px;
  border: solid #c4c4c4;
  border-width: ${(p) => (p.$active ? '2px 2px 0 0' : '0 0 2px 0')};
`;
const TabFill = styled.div`
  flex: 1;
  border-bottom: 2px solid #c4c4c4;
  &::before { content: ''; display: block; width: 2px; height: 43px; background: #c4c4c4; }
`;
const Fields = styled.div`
  display: grid;
  grid-template-columns: 177px 299px;
  grid-auto-rows: 52px;
  row-gap: 6px;
  align-items: center;
  padding: 7px 0 6px 23px;
`;
const FieldLabel = styled.label``;
const Picker = styled.div`
  position: relative;
  & > svg { position: absolute; left: 7px; top: 12px; pointer-events: none; }
  & > span { position: absolute; right: 9px; top: 21px; pointer-events: none; }
`;
const boxed = css`
  width: 100%;
  border: 2px solid #c4c4c4;
  border-radius: 0;
  background: #fff;
`;
const SelectBox = styled.select`
  ${boxed}
  height: 52px;
  padding: 0 30px 0 42px;
  appearance: none;
`;
const TextBox = styled.input`
  ${boxed}
  height: 50px;
  padding: 0 5px;
`;
const Selection = styled.div`
  display: flex;
  align-items: center;
  gap: 20px;
`;
const SelectionButton = styled.button<{ $active?: boolean }>`
  display: flex;
  align-items: center;
  gap: 6px;
  width: 152px;
  height: 52px;
  padding-left: 6px;
  border: 2px solid ${(p) => (p.$active ? ACCENT : '#c4c4c4')};
  background: ${(p) => (p.$active ? ACCENT : '#fff')};
  color: ${(p) => (p.$active ? '#fff' : '#333')};
`;
const Check = styled.input`
  position: relative;
  appearance: none;
  display: block;
  width: 24px;
  height: 24px;
  margin: 0 0 0 9px;
  border: 2px solid #444;
  border-radius: 5px;
  background: linear-gradient(#b5b5b5, #ececec);
  &:checked::after {
    content: '';
    position: absolute;
    left: 6px;
    top: 0;
    width: 8px;
    height: 15px;
    border: solid #000;
    border-width: 0 3px 3px 0;
    transform: rotate(40deg);
  }
`;
const DialogFoot = styled.div`
  display: flex;
  align-items: center;
  gap: 35px;
  height: 67px;
  padding: 3px 19px 0 26px;
  border-top: 2px solid #ccc;
`;
const Spacer = styled.div`
  flex: 1;
`;
const FootButton = styled.button`
  width: 112px;
  height: 37px;
  border: 2px solid #bbb;
  background: #eaeaea;
  color: #666;
`;
const Status = styled.output`
  margin: auto 32px 10px 0;
  font-weight: 700;
  color: #222;
`;

const textFields = [
  ['distance', 'Distance', '1'],
  ['taper', 'Taper Angle', '0.0 deg'],
  ['twist', 'Twist Angle', '450.0 deg'],
];

const PickerField = ({ id, label, icon, value }: { id: string; label: string; icon: string; value: string }) => (
  <>
    <FieldLabel htmlFor={id}>{label}</FieldLabel>
    <Picker>
      <SelectBox id={id} defaultValue={value}><option>{value}</option></SelectBox>
      <Icon name={icon} size={29} />
      <CaretShape />
    </Picker>
  </>
);

const SelectionField = ({ label, value, active }: { label: string; value: string; active?: boolean }) => (
  <>
    <FieldLabel htmlFor={label}>{label}</FieldLabel>
    <Selection>
      <SelectionButton id={label} type="button" $active={active}><Icon name="cursor" size={27} />{value}</SelectionButton>
      <button type="button" aria-label={`Clear ${label}`}><Icon name="cross" size={18} /></button>
    </Selection>
  </>
);

/* ---------- timeline ---------- */

const Timeline = styled.footer`
  display: flex;
  height: 94px;
  border-top: 5px solid #c9c9c9;
  background: #f1f1f1;
`;
const Transport = styled.div`
  flex: none;
  display: flex;
  align-items: center;
  gap: 24px;
  width: 257px;
  height: 44px;
  margin-top: 29px;
  padding-left: 19px;
`;
const Track = styled.div`
  flex: none;
  padding-top: 21px;
`;
const Steps = styled.ul`
  display: flex;
  padding-left: 10px;
`;
const Step = styled.li`
  position: relative;
  display: flex;
  flex-direction: column;
  align-items: center;
  width: 45px;
  &::after { content: ''; width: 4px; height: 9px; background: #ccc; }
`;
const StepButton = styled.button<{ $tint?: string }>`
  display: flex;
  align-items: center;
  justify-content: center;
  width: 45px;
  height: 45px;
  padding-right: 2px;
  border-radius: 3px;
  background: ${(p) => p.$tint ?? 'transparent'};
`;
const Faded = styled.span<{ $on: boolean }>`
  opacity: ${(p) => (p.$on ? 0.26 : 1)};
`;
const Rail = styled.div`
  display: grid;
  grid-template-columns: 5px 8px 1fr;
  gap: 4px;
  height: 4px;
  margin-right: 21px;
  & > i { background: #ccc; }
`;
const Marker = styled.svg`
  position: absolute;
  left: -12px;
  top: -4px;
  width: 23px;
  height: 61px;
  z-index: 1;
`;
const TimelineEnd = styled.div`
  flex: 1;
  display: flex;
  flex-direction: column;
  align-items: flex-end;
  gap: 22px;
  padding-right: 11px;
`;
const Grip = styled.div`
  width: 41px;
  height: 14px;
  border-radius: 0 0 6px 6px;
  background: #ccc;
`;
const GearButton = styled.button`
  margin-right: 15px;
`;
const WindowCorner = styled.div`
  position: absolute;
  left: 0;
  bottom: 0;
  width: 30px;
  height: 137px;
  border-radius: 0 14px 0 0;
  border: solid #c4c4c4;
  border-width: 1px 1px 0 0;
  background: linear-gradient(#e6e6e6 52px, #d2d2d2 52px 54px, #efefef 54px);
  box-shadow: 0 0 24px rgba(0, 0, 0, 0.28);
`;

const F = 'fillet', S = 'editSketch', E = 'extrude';
const steps = [
  S, E, S, E, 'combine', 'combine', F, F, F, 'dots', 'copyBox', 'copyBox', 'copyCan', 'canToBox', 'copyCan', 'boxStar',
  S, S, 'sheet', 'sweep', 'chamfer', 'chamfer', F, S, S, 'sheet',
  F, F, S, 'sweep', 'sweep', F, F, F, F, S, E, S, E, F, F, F, F, S, E,
];
const tints: Record<number, string> = { 0: '#e5e81f', 1: '#e5e81f', 4: '#ff4242', 5: '#ff4242', 23: ACCENT, 24: ACCENT };
const CURRENT = 26;

export default function App() {
  return (
    <Shell>
      <Global />
      <TopBar>
        <QuickTools>
          <BarButton aria-label="Data panel"><Icon name="grid9" size={26} /></BarButton>
          <BarButton aria-label="File"><Icon name="file" size={28} /><CaretShape $tone="#666" /></BarButton>
          <BarButton aria-label="Save"><Icon name="save" size={27} /></BarButton>
          <ToolPair>
            <BarButton aria-label="Undo"><Icon name="undo" size={25} /><CaretShape $tone="#666" /></BarButton>
            <BarButton aria-label="Redo"><Icon name="redo" size={25} /><CaretShape $tone="#999" /></BarButton>
          </ToolPair>
        </QuickTools>
        <SmallTab $width={74} aria-label="Home"><Icon name="home" size={27} /></SmallTab>
        <DocTab>
          <DocTitle><Icon name="lock" size={26} />Untitled*</DocTitle>
          <button aria-label="Close Untitled"><Icon name="close" size={18} /></button>
        </DocTab>
        <DocTab $active>
          <DocTitle $active><Icon name="orangeCube" size={29} />Dragon Fruit 3 Sided v34*</DocTitle>
          <button aria-label="Close Dragon Fruit"><Icon name="close" size={18} /></button>
        </DocTab>
        <SmallTab $width={52} $lead={7} aria-label="New design"><Icon name="plus" size={24} /></SmallTab>
        <Account>
          <button aria-label="Extensions"><Icon name="spark" size={30} /></button>
          <BarButton aria-label="Job status"><Icon name="clock" size={30} />1</BarButton>
          <button aria-label="Notifications"><Icon name="bell" size={29} /></button>
          <button aria-label="Help"><Icon name="help" size={30} /></button>
          <button aria-label="Account"><Icon name="avatar" size={44} /></button>
        </Account>
      </TopBar>

      <Ribbon>
        <Workspace>DESIGN <CaretShape /></Workspace>
        <RibbonMain>
          <RibbonTabs>
            {['SOLID', 'SURFACE', 'MESH', 'SHEET METAL', 'PLASTIC', 'UTILITIES'].map((t) => (
              <RibbonTab key={t} $active={t === 'SOLID'}>{t}</RibbonTab>
            ))}
          </RibbonTabs>
          <Groups>
            {groups.map((g) => (
              <Group key={g.label} $pad={g.pad}>
                <GroupIcons>
                  {g.tools.map((t) => <GroupTool key={t} aria-label={t}><Icon name={t} size={60} /></GroupTool>)}
                </GroupIcons>
                <GroupLabel>{g.label}<CaretShape /></GroupLabel>
              </Group>
            ))}
          </Groups>
        </RibbonMain>
      </Ribbon>

      <Stage>
        <LeftDock>
          <DockHeader>
            <IconBox aria-label="Collapse browser"><Icon name="collapse" size={18} /></IconBox>
            <DockTitle>BROWSER</DockTitle>
            <IconBox aria-label="Minimise browser"><Icon name="minusDot" size={15} /></IconBox>
          </DockHeader>
          <TreeArea>
            <ScrollRail><ScrollThumb /></ScrollRail>
            <ul>
              {nodes.map((n, i) => (
                <TreeRow key={i} $level={n.l}>
                  <Expander aria-label={`Expand ${n.t}`} disabled={n.leaf}>{!n.leaf && <ExpandMark open={n.open} />}</Expander>
                  <EyeButton aria-label="Toggle visibility" $dim={n.dim}><Icon name={n.eye ?? 'eyeOff'} size={30} /></EyeButton>
                  <NodeButton $selected={n.sel} $hatched={n.hatch}><Icon name={n.i} size={29} />{n.t}</NodeButton>
                </TreeRow>
              ))}
            </ul>
          </TreeArea>
          <DockHeader>
            <IconBox $blank aria-hidden="true"><Icon name="collapse" size={18} /></IconBox>
            <DockTitle>COMMENTS</DockTitle>
            <IconBox aria-label="Open comments"><Icon name="plusDot" size={15} /></IconBox>
          </DockHeader>
        </LeftDock>

        <View>
          <Model />
          <NavBar>
            <NavTool $gap={9} aria-label="Orbit"><Icon name="orbit" size={29} /><CaretShape /></NavTool>
            <NavTool aria-label="Look at"><Icon name="lookAt" size={29} /></NavTool>
            <NavTool $lead={6} aria-label="Pan"><Icon name="hand" size={30} /></NavTool>
            <NavTool $lead={6} aria-label="Zoom"><Icon name="zoomPm" size={30} /></NavTool>
            <NavTool $lead={6} $gap={9} aria-label="Fit"><Icon name="zoomFit" size={30} /><CaretShape /></NavTool>
            <NavTool aria-label="Display"><Icon name="monitor" size={29} /><CaretShape /></NavTool>
            <NavTool aria-label="Grid"><Icon name="gridView" size={29} /><CaretShape /></NavTool>
            <NavTool aria-label="Viewports"><Icon name="viewports" size={29} /><CaretShape /></NavTool>
          </NavBar>
        </View>

        <RightDock>
          <Cube viewBox="2210 219 190 208" role="img" aria-label="View cube">
            <defs>
              <linearGradient id="face" x2="0" y2="1"><stop offset="0" stopColor="#f2f2f2" /><stop offset="1" stopColor="#dadada" /></linearGradient>
              <filter id="soft" x="-30%" y="-60%" width="160%" height="220%"><feGaussianBlur stdDeviation="6" /></filter>
            </defs>
            <ellipse cx="2294" cy="376" rx="54" ry="9" fill="#777" opacity=".75" filter="url(#soft)" />
            <path d="M2248 292L2257 284H2330L2337 292Z" fill="#f4f4f4" stroke="#aaa" strokeDasharray="14 6" />
            <path d="M2248 292H2337L2336 377H2250Z" fill="url(#face)" stroke="#aaa" strokeDasharray="14 6" />
            <rect x="2265" y="308" width="55" height="54" fill="#dcdee0" />
            <path d="M2285 287H2289M2293 287H2296M2299 287H2302" stroke="#999" strokeWidth="2" />
            <text x="2293" y="343" fontSize="21" fontWeight="700" fill="#96999e" textAnchor="middle" fontFamily="'Liberation Sans Narrow', 'Noto Sans', sans-serif">LEFT</text>
            <path d="M2340 277L2338 379" stroke="#8080ff" strokeWidth="2" />
            <path d="M2235 379H2338" stroke="#66e066" strokeWidth="2" />
            <text x="2339" y="272" fontSize="24" fill="#8080ff" textAnchor="middle">Z</text>
            <text x="2222" y="388" fontSize="24" fill="#80ff80" textAnchor="middle">Y</text>
          </Cube>

          <Dialog onSubmit={(e) => e.preventDefault()}>
            <DialogHead>
              <button type="button" aria-label="Minimise"><Icon name="minusDot" size={17} /></button>
              <DockTitle>EDIT FEATURE</DockTitle>
              <button type="button" aria-label="Dock"><Icon name="expand" size={19} /></button>
            </DialogHead>
            <DialogTabs>
              <DialogTab type="button" $active>Feature</DialogTab>
              <DialogTab type="button">Analysis</DialogTab>
              <TabFill />
            </DialogTabs>
            <Fields>
              <PickerField id="type" label="Type" icon="singlePath" value="Single Path" />
              <SelectionField label="Profile" value="2 selected" active />
              <SelectionField label="Path" value="1 selected" />
              <FieldLabel htmlFor="chain">Chain Selection</FieldLabel>
              <Check id="chain" type="checkbox" defaultChecked />
              {textFields.map(([id, label, value]) => (
                <React.Fragment key={id}>
                  <FieldLabel htmlFor={id}>{label}</FieldLabel>
                  <TextBox id={id} defaultValue={value} />
                </React.Fragment>
              ))}
              <PickerField id="orientation" label="Orientation" icon="perpendicular" value="Perpendicular" />
              <PickerField id="operation" label="Operation" icon="newBody" value="New Body" />
            </Fields>
            <DialogFoot>
              <button type="button" aria-label="Information"><Icon name="info" size={23} /></button>
              <Spacer />
              <FootButton type="submit">OK</FootButton>
              <FootButton type="button">Cancel</FootButton>
            </DialogFoot>
          </Dialog>
          <Status>Multiple selections</Status>
        </RightDock>
      </Stage>

      <Timeline>
        <Transport>
          {['toStart', 'stepBack', 'play', 'stepOn', 'toEnd'].map((n) => (
            <button key={n} aria-label={n}><Icon name={n} size={23} /></button>
          ))}
        </Transport>
        <Track>
          <Steps>
            {steps.map((s, i) => (
              <Step key={i}>
                {i === CURRENT && (
                  <Marker viewBox="0 0 23 61" aria-hidden="true"><path d="M0 0H23V10L14 20V61H10V20L0 10Z" fill="#666" /></Marker>
                )}
                <StepButton $tint={tints[i]} aria-label={`Step ${i + 1}`}>
                  <Faded $on={i >= CURRENT}><Icon name={s} size={30} /></Faded>
                </StepButton>
              </Step>
            ))}
          </Steps>
          <Rail><i /><i /><i /></Rail>
        </Track>
        <TimelineEnd>
          <Grip />
          <GearButton aria-label="Timeline settings"><Icon name="gear" size={29} /></GearButton>
        </TimelineEnd>
      </Timeline>
      <WindowCorner />
    </Shell>
  );
}
